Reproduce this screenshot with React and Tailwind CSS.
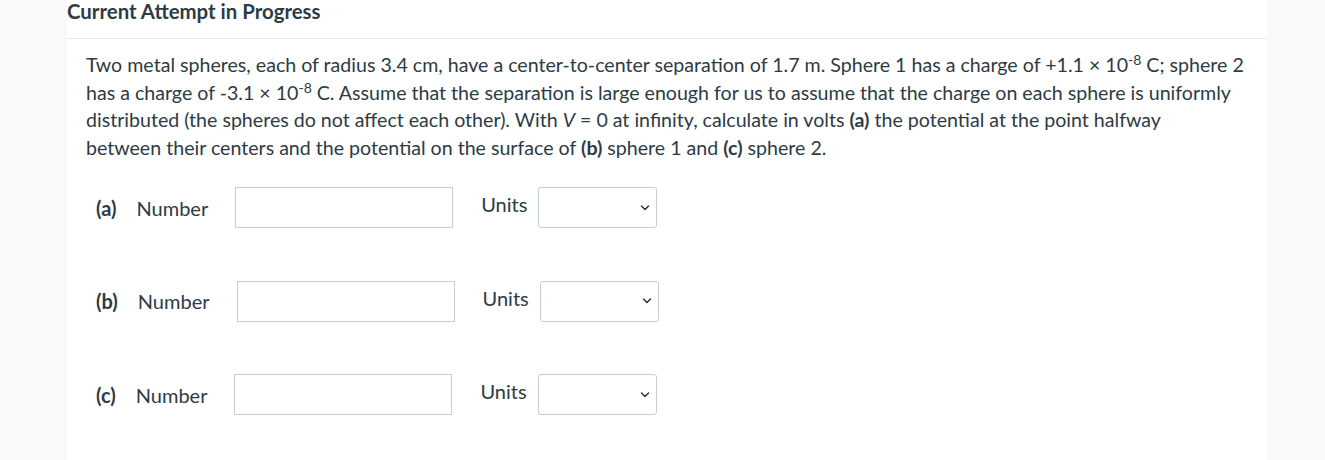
import React from "react";

function Chevron() {
  return (
    <svg width="10" height="7" viewBox="0 0 10 7" className="absolute right-[6px] top-1/2 -translate-y-1/2">
      <path d="M1.5 1.5 L5 5 L8.5 1.5" fill="none" stroke="#333" strokeWidth="1.5" strokeLinecap="round" strokeLinejoin="round" />
    </svg>
  );
}

function Row({ letter }) {
  return (
    <div className="flex items-center h-[41px] pl-[10px]">
      <span className="font-bold">({letter})</span>
      <span className="ml-[20px]">Number</span>
      <div className="ml-[27px] w-[218px] h-[41px] border border-[#c7cdd1] bg-white"></div>
      <span className="ml-[28px] -mt-[7px]">Units</span>
      <div className="relative ml-[11px] w-[119px] h-[41px] border border-[#c7cdd1] rounded-[3px] bg-white">
        <Chevron />
      </div>
    </div>
  );
}

export default function App() {
  return (
    <div
      className="w-full h-[460px] overflow-hidden bg-[#f9f9f9] flex text-[#2d3b45]"
      style={{ fontFamily: "Lato, 'Open Sans', sans-serif" }}
    >
      <div className="w-[67px] shrink-0"></div>
      <div className="w-[1200px] shrink-0 bg-white">
        <div className="h-[39px] border-b border-[#e8e8e8] text-[20.4px] font-bold leading-[22px]">
          Current Attempt in Progress
        </div>
        <div className="px-[19px] pt-[12px]">
          <p className="text-[19.6px] leading-[27.5px] max-w-[1160px]">
            Two metal spheres, each of radius 3.4 cm, have a center-to-center separation of 1.7 m. Sphere 1 has a charge of +1.1 × 10
            <sup className="text-[14px]">-8</sup> C; sphere 2 has a charge of -3.1 × 10
            <sup className="text-[14px]">-8</sup> C. Assume that the separation is large enough for us to assume that the charge on each sphere is uniformly distributed (the spheres do not affect each other). With <i>V</i> = 0 at infinity, calculate in volts <b>(a)</b> the potential at the point halfway
            <br />
            between their centers and the potential on the surface of <b>(b)</b> sphere 1 and <b>(c)</b> sphere 2.
          </p>
          <div className="mt-[26px] flex flex-col gap-[52.5px] text-[20px]">
            <Row letter="a" />
            <Row letter="b" />
            <Row letter="c" />
          </div>
        </div>
      </div>
    </div>
  );
}
